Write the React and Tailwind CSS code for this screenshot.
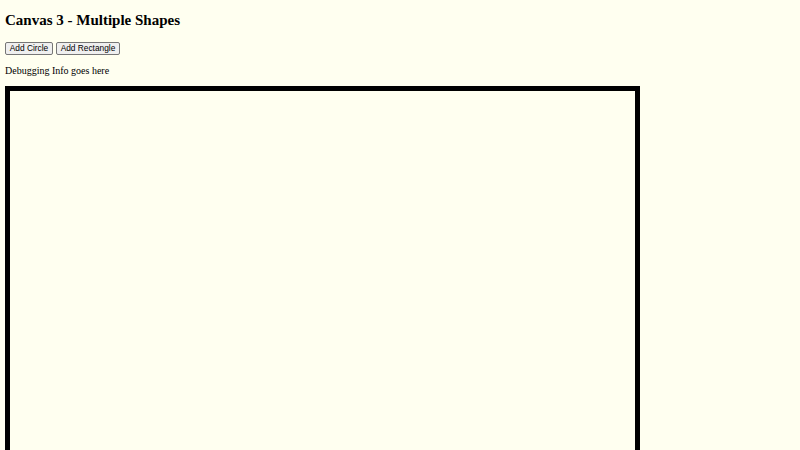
export default function App() {
  return (
    <div className="min-h-[450px] w-full bg-[#fffff0] px-[5px] pt-[12.45px] overflow-hidden h-[450px]" style={{ fontFamily: '"Liberation Serif", serif' }}>
      <h2 className="text-[15px] font-bold leading-[17.25px] mb-[12.45px] text-black">Canvas 3 - Multiple Shapes</h2>
      <div className="flex gap-[3px] h-[13px]">
        <button className="h-[13px] px-[3.75px] text-[8.33px] leading-[9.5px] bg-[#efefef] border border-[#767676] rounded-[2px] text-black" style={{ fontFamily: '"Liberation Sans", Arial, sans-serif' }}>Add Circle</button>
        <button className="h-[13px] px-[3.75px] text-[8.33px] leading-[9.5px] bg-[#efefef] border border-[#767676] rounded-[2px] text-black" style={{ fontFamily: '"Liberation Sans", Arial, sans-serif' }}>Add Rectangle</button>
      </div>
      <p className="mt-[10px] mb-[9px] text-[10px] leading-[11.5px] text-black">Debugging Info goes here</p>
      <div className="w-[635px] h-[500px] border-[5px] border-black"></div>
    </div>
  );
}
